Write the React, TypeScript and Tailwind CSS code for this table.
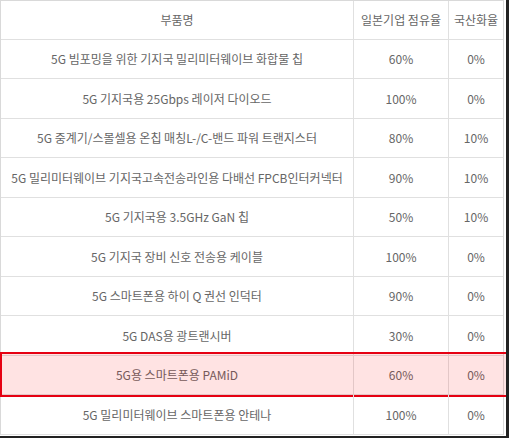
import React from "react";

interface Part {
  name: string;
  japan: string;
  local: string;
  highlight?: boolean;
}

const parts: Part[] = [
  { name: "5G 빔포밍을 위한 기지국 밀리미터웨이브 화합물 칩", japan: "60%", local: "0%" },
  { name: "5G 기지국용 25Gbps 레이저 다이오드", japan: "100%", local: "0%" },
  { name: "5G 중계기/스몰셀용 온칩 매칭L-/C-밴드 파워 트랜지스터", japan: "80%", local: "10%" },
  { name: "5G 밀리미터웨이브 기지국고속전송라인용 다배선 FPCB인터커넥터", japan: "90%", local: "10%" },
  { name: "5G 기지국용 3.5GHz GaN 칩", japan: "50%", local: "10%" },
  { name: "5G 기지국 장비 신호 전송용 케이블", japan: "100%", local: "0%" },
  { name: "5G 스마트폰용 하이 Q 권선 인덕터", japan: "90%", local: "0%" },
  { name: "5G DAS용 광트랜시버", japan: "30%", local: "0%" },
  { name: "5G용 스마트폰용 PAMiD", japan: "60%", local: "0%", highlight: true },
  { name: "5G 밀리미터웨이브 스마트폰용 안테나", japan: "100%", local: "0%" },
];

const rowHeights = ["h-[39px]", "h-[40px]"];

const App: React.FC = () => {
  return (
    <div className="w-[509px] h-[438px] bg-white relative overflow-hidden text-[12px] text-[#666] font-['Noto_Sans_CJK_KR',sans-serif]">
      <div className="w-[504px] border-t border-l border-r border-[#d9d9d9]">
        <div className="grid grid-cols-[352px_95px_55px] h-[39px] border-b border-[#e0e0e0]">
          <div className="flex items-center justify-center">부품명</div>
          <div className="flex items-center justify-center border-l border-[#e0e0e0]">일본기업 점유율</div>
          <div className="flex items-center justify-center border-l border-[#e0e0e0]">국산화율</div>
        </div>
        {parts.map((p, idx) => (
          <div
            key={idx}
            className={`relative grid grid-cols-[352px_95px_55px] border-b border-[#e0e0e0] ${rowHeights[idx % 2]}`}
          >
            <div className="flex items-center justify-center whitespace-nowrap">{p.name}</div>
            <div className="flex items-center justify-center border-l border-[#e0e0e0]">{p.japan}</div>
            <div className="flex items-center justify-center border-l border-[#e0e0e0]">{p.local}</div>
            {p.highlight && (
              <div className="absolute -top-[4px] -bottom-[3px] -left-[1px] -right-[5px] border-2 border-[#e60012] bg-[rgba(255,0,0,0.11)]" />
            )}
          </div>
        ))}
      </div>
      <div className="absolute top-0 right-0 w-[3px] h-full bg-[#222]" />
      <div className="absolute bottom-0 left-0 w-full h-[2px] bg-[#222]" />
    </div>
  );
};

export default App;
